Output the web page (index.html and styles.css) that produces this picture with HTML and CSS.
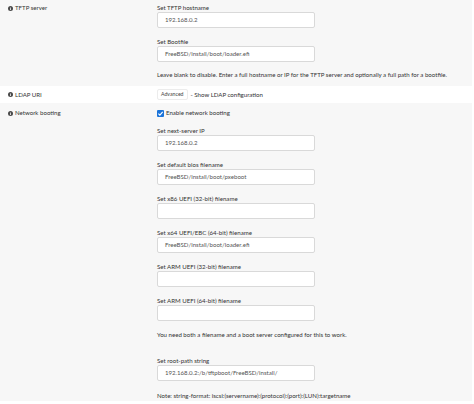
FILE: index.html
```html
<!DOCTYPE html>
<html>
<head>
<meta charset="utf-8">
<link rel="stylesheet" href="styles.css">
</head>
<body>
<div class="form">
  <div class="row gray tftp">
    <div class="label"><svg class="info" viewBox="0 0 10 10"><circle cx="5" cy="5" r="5" fill="#4a4a4a"/><rect x="4.2" y="4.2" width="1.6" height="3.8" fill="#fff"/><circle cx="5" cy="2.7" r="0.9" fill="#fff"/></svg>TFTP server</div>
    <div class="content">
      <div class="field"><div class="flabel">Set TFTP hostname</div><div class="input">192.168.0.2</div></div>
      <div class="field"><div class="flabel">Set Bootfile</div><div class="input">FreeBSD/install/boot/loader.efi</div></div>
      <div class="help">Leave blank to disable. Enter a full hostname or IP for the TFTP server and optionally a full path for a bootfile.</div>
    </div>
  </div>
  <div class="row ldap">
    <div class="label"><svg class="info" viewBox="0 0 10 10"><circle cx="5" cy="5" r="5" fill="#4a4a4a"/><rect x="4.2" y="4.2" width="1.6" height="3.8" fill="#fff"/><circle cx="5" cy="2.7" r="0.9" fill="#fff"/></svg>LDAP URI</div>
    <div class="content inline"><span class="btn">Advanced</span><span class="txt">- Show LDAP configuration</span></div>
  </div>
  <div class="row gray netboot">
    <div class="label"><svg class="info" viewBox="0 0 10 10"><circle cx="5" cy="5" r="5" fill="#4a4a4a"/><rect x="4.2" y="4.2" width="1.6" height="3.8" fill="#fff"/><circle cx="5" cy="2.7" r="0.9" fill="#fff"/></svg>Network booting</div>
    <div class="content">
      <div class="check"><svg class="cb" viewBox="0 0 8 8"><rect x="0" y="0" width="8" height="8" rx="1.2" fill="#1a73d9"/><path d="M1.6 4.1 L3.3 5.8 L6.5 2.2" stroke="#fff" stroke-width="1.3" fill="none"/></svg>Enable network booting</div>
      <div class="field"><div class="flabel">Set next-server IP</div><div class="input">192.168.0.2</div></div>
      <div class="field"><div class="flabel">Set default bios filename</div><div class="input">FreeBSD/install/boot/pxeboot</div></div>
      <div class="field"><div class="flabel">Set x86 UEFI (32-bit) filename</div><div class="input"></div></div>
      <div class="field"><div class="flabel">Set x64 UEFI/EBC (64-bit) filename</div><div class="input">FreeBSD/install/boot/loader.efi</div></div>
      <div class="field"><div class="flabel">Set ARM UEFI (32-bit) filename</div><div class="input"></div></div>
      <div class="field"><div class="flabel">Set ARM UEFI (64-bit) filename</div><div class="input"></div></div>
      <div class="help">You need both a filename and a boot server configured for this to work.</div>
      <div class="field root"><div class="flabel">Set root-path string</div><div class="input">192.168.0.2:/b/tftpboot/FreeBSD/install/</div></div>
      <div class="help note">Note: string-format: iscsi:(servername):(protocol):(port):(LUN):targetname</div>
    </div>
  </div>
</div>
</body>
</html>
```

FILE: styles.css
```css
html, body {
  margin: 0;
  padding: 0;
  background: #ffffff;
}
body {
  font-family: Lato, "Open Sans", sans-serif;
  font-size: 6.1px;
  color: #333333;
}
.form {
  width: 472px;
}
.row {
  display: grid;
  grid-template-columns: 157px 1fr;
}
.gray {
  background: #f7f7f7;
}
.label {
  display: flex;
  align-items: center;
  height: 8px;
  line-height: 8px;
  padding-left: 8px;
  gap: 2px;
}
.info {
  width: 5px;
  height: 5px;
}
.tftp {
  padding: 4px 0 7px;
}
.ldap {
  padding: 3px 0 3px;
  align-items: center;
}
.ldap .label {
  height: 11px;
}
.netboot {
  padding: 6px 0 1px;
}
.content {
  display: flex;
  flex-direction: column;
}
.field {
  display: flex;
  flex-direction: column;
  margin-bottom: 10px;
}
.flabel {
  line-height: 8px;
  height: 8px;
}
.input {
  box-sizing: border-box;
  width: 158px;
  height: 16px;
  border: 1px solid #d9d9d9;
  border-radius: 2px;
  background: #fff;
  padding: 0 7px;
  line-height: 14px;
  color: #555;
}
.help {
  line-height: 8px;
  height: 8px;
}
.tftp .help {
  margin-top: -1px;
}
.inline {
  flex-direction: row;
  align-items: center;
  gap: 3px;
}
.btn {
  box-sizing: border-box;
  height: 11px;
  line-height: 9px;
  padding: 0 3px;
  border: 1px solid #ececec;
  border-radius: 2px;
  background: #fff;
  font-size: 5.2px;
  color: #444;
}
.check {
  display: flex;
  align-items: center;
  gap: 2px;
  height: 8px;
  line-height: 8px;
  margin-bottom: 10px;
}
.cb {
  width: 7px;
  height: 7px;
}
.netboot .help {
  margin-bottom: 18px;
}
.netboot .root {
  margin-bottom: 11px;
}
.netboot .help.note {
  margin-bottom: 0;
}
```
